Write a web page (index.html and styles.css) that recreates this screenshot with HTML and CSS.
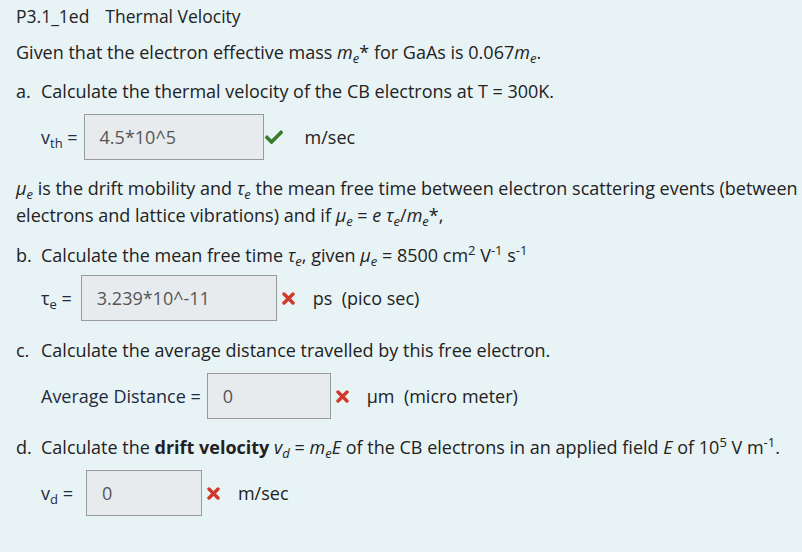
FILE: index.html
```html
<!DOCTYPE html>
<html lang="en">
<head>
<meta charset="utf-8">
<title>P3.1_1ed Thermal Velocity</title>
<link rel="stylesheet" href="styles.css">
</head>
<body>
<div class="page">
  <div class="title"><span class="code">P3.1_1ed</span>Thermal Velocity</div>

  <p class="text given">Given that the electron effective mass <i>m<sub>e</sub></i>* for GaAs is 0.067<i>m<sub>e</sub></i>.</p>

  <div class="part part-a"><span class="marker">a.</span><span>Calculate the thermal velocity of the CB electrons at T = 300K.</span></div>
  <div class="answer">
    <span class="label">v<sub>th</sub> =</span>
    <span class="field w-vth">4.5*10^5</span>
    <svg class="icon ok" viewBox="0 0 18 14" width="18" height="14"><path d="M2 7.5 L6.5 12 L16 2.5" fill="none" stroke="#3a7a2c" stroke-width="3.6" stroke-linecap="square"/></svg>
    <span class="unit">m/sec</span>
  </div>

  <p class="text mu">
    <i>μ<sub>e</sub></i> is the drift mobility and <i>τ<sub>e</sub></i> the mean free time between electron scattering events (between electrons and lattice vibrations) and if <i>μ<sub>e</sub></i> = <i>e τ<sub>e</sub></i>/<i>m<sub>e</sub></i>*,
  </p>

  <div class="part part-b"><span class="marker">b.</span><span>Calculate the mean free time <i>τ<sub>e</sub></i>, given <i>μ<sub>e</sub></i> = 8500 cm<sup>2</sup> V<sup>-1</sup> s<sup>-1</sup></span></div>
  <div class="answer answer-b">
    <span class="label label-tau">τ<sub>e</sub> =</span>
    <span class="field w-tau">3.239*10^-11</span>
    <svg class="icon bad" viewBox="0 0 13 13" width="13" height="13"><path d="M2 2 L11 11 M11 2 L2 11" fill="none" stroke="#d2382a" stroke-width="3.4" stroke-linecap="round"/></svg>
    <span class="unit">ps&nbsp; (pico sec)</span>
  </div>

  <div class="part part-c"><span class="marker">c.</span><span>Calculate the average distance travelled by this free electron.</span></div>
  <div class="answer">
    <span class="label">Average Distance =</span>
    <span class="field w-avg">0</span>
    <svg class="icon bad" viewBox="0 0 13 13" width="13" height="13"><path d="M2 2 L11 11 M11 2 L2 11" fill="none" stroke="#d2382a" stroke-width="3.4" stroke-linecap="round"/></svg>
    <span class="unit">μm&nbsp; (micro meter)</span>
  </div>

  <div class="part part-d"><span class="marker">d.</span><span>Calculate the <b>drift velocity</b> <i>v<sub>d</sub></i> = <i>m<sub>e</sub>E</i> of the CB electrons in an applied field <i>E</i> of 10<sup>5</sup> V m<sup>-1</sup>.</span></div>
  <div class="answer">
    <span class="label label-vd">v<sub>d</sub> =</span>
    <span class="field w-vd">0</span>
    <svg class="icon bad" viewBox="0 0 13 13" width="13" height="13"><path d="M2 2 L11 11 M11 2 L2 11" fill="none" stroke="#d2382a" stroke-width="3.4" stroke-linecap="round"/></svg>
    <span class="unit">m/sec</span>
  </div>
</div>
</body>
</html>
```

FILE: styles.css
```css
html, body {
  margin: 0;
  padding: 0;
  background: #e8f3f6;
}
body {
  font-family: "Open Sans", "Noto Sans", "Liberation Sans", sans-serif;
  font-size: 18px;
  line-height: 27px;
  color: #222;
}
.page {
  padding: 3px 0 20px 16px;
}
.title {
  margin: 0;
  font-size: 17.5px;
}
.title .code {
  margin-right: 16px;
}
.text {
  margin: 0;
}
.given {
  margin-top: 9px;
}
.part {
  display: flex;
}
.marker {
  width: 25px;
  flex: none;
}
.part-a { margin-top: 12px; }
.part-b { margin-top: 13px; }
.part-c { margin-top: 16px; }
.part-d { margin-top: 15px; }
.mu { margin-top: 15px; }

sub, sup {
  font-size: 13px;
  line-height: 1;
}
sub { vertical-align: -4px; }
sup { vertical-align: 7px; }

.answer {
  display: flex;
  align-items: center;
  margin-top: 9px;
  padding-left: 25px;
  height: 46px;
}
.answer-b {
  margin-top: 6px;
}
.label {
  margin-right: 6px;
  color: #232a40;
}
.label-tau {
  margin-right: 9px;
}
.label-vd {
  margin-right: 13px;
}
.field {
  box-sizing: border-box;
  height: 46px;
  border: 1px solid #9a9a9a;
  background: #e8ebee;
  color: #555;
  padding-left: 15px;
  display: flex;
  align-items: center;
}
.w-vth { width: 180px; }
.w-tau { width: 196px; }
.w-avg { width: 124px; }
.w-vd  { width: 116px; }
.icon { flex: none; }
.icon.ok { margin-left: 1px; margin-right: 22px; }
.icon.bad { margin-left: 5px; margin-right: 18px; }
```
